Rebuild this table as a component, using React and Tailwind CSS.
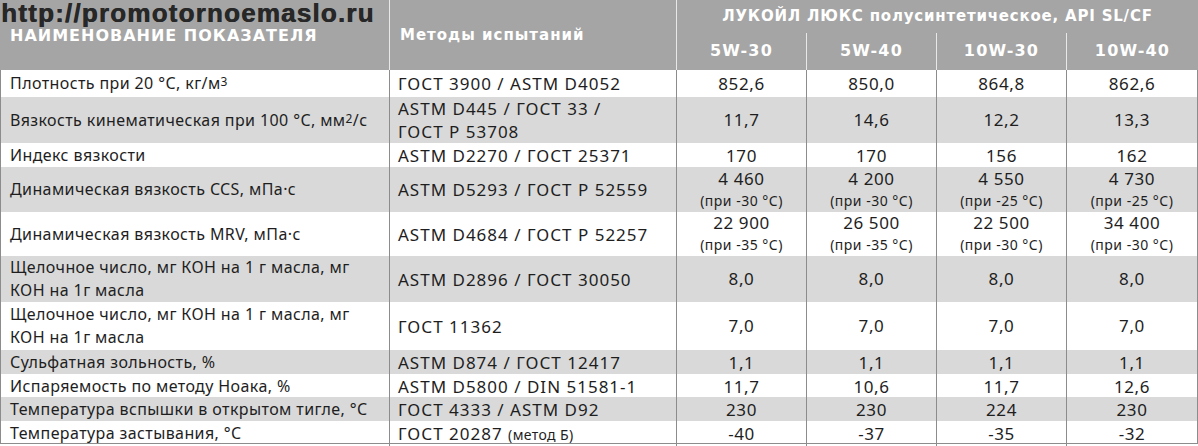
import React from "react";

const rows = [
  {
    name: (
      <>
        Плотность при 20 °C, кг/м<sup className="text-[12px] relative -top-[3px]">3</sup>
      </>
    ),
    method: "ГОСТ 3900 / ASTM D4052",
    vals: ["852,6", "850,0", "864,8", "862,6"],
    h: "h-[27px]",
  },
  {
    name: (
      <>
        Вязкость кинематическая при 100 °C, мм<sup className="text-[12px] relative -top-[3px]">2</sup>/с
      </>
    ),
    method: (
      <>
        ASTM D445 / ГОСТ 33 /
        <br />
        ГОСТ Р 53708
      </>
    ),
    vals: ["11,7", "14,6", "12,2", "13,3"],
    h: "h-[46px]",
  },
  {
    name: "Индекс вязкости",
    method: "ASTM D2270 / ГОСТ 25371",
    vals: ["170", "170", "156", "162"],
    h: "h-[24px]",
  },
  {
    name: "Динамическая вязкость CCS, мПа·с",
    method: "ASTM D5293 / ГОСТ Р 52559",
    vals: [
      ["4 460", "(при -30 °C)"],
      ["4 200", "(при -30 °C)"],
      ["4 550", "(при -25 °C)"],
      ["4 730", "(при -25 °C)"],
    ],
    h: "h-[45px]",
  },
  {
    name: "Динамическая вязкость MRV, мПа·с",
    method: "ASTM D4684 / ГОСТ Р 52257",
    vals: [
      ["22 900", "(при -35 °C)"],
      ["26 500", "(при -35 °C)"],
      ["22 500", "(при -30 °C)"],
      ["34 400", "(при -30 °C)"],
    ],
    h: "h-[44px]",
  },
  {
    name: (
      <>
        Щелочное число, мг КОН на 1 г масла, мг
        <br />
        КОН на 1г масла
      </>
    ),
    method: "ASTM D2896 / ГОСТ 30050",
    vals: ["8,0", "8,0", "8,0", "8,0"],
    h: "h-[46px]",
  },
  {
    name: (
      <>
        Щелочное число, мг КОН на 1 г масла, мг
        <br />
        КОН на 1г масла
      </>
    ),
    method: "ГОСТ 11362",
    vals: ["7,0", "7,0", "7,0", "7,0"],
    h: "h-[48px]",
  },
  {
    name: "Сульфатная зольность, %",
    method: "ASTM D874 / ГОСТ 12417",
    vals: ["1,1", "1,1", "1,1", "1,1"],
    h: "h-[24px]",
  },
  {
    name: "Испаряемость по методу Ноака, %",
    method: "ASTM D5800 / DIN 51581-1",
    vals: ["11,7", "10,6", "11,7", "12,6"],
    h: "h-[23px]",
  },
  {
    name: "Температура вспышки в открытом тигле, °C",
    method: "ГОСТ 4333 / ASTM D92",
    vals: ["230", "230", "224", "230"],
    h: "h-[24px]",
  },
  {
    name: "Температура застывания, °C",
    method: (
      <>
        ГОСТ 20287 <span className="text-[14px] tracking-[0.4px]">(метод Б)</span>
      </>
    ),
    vals: ["-40", "-37", "-35", "-32"],
    h: "h-[22px]",
  },
];

const grades = ["5W-30", "5W-40", "10W-30", "10W-40"];

function Value({ v }) {
  if (Array.isArray(v)) {
    return (
      <div className="flex flex-col items-center">
        <span className="text-[17px] leading-[22px] tracking-[0.6px]">{v[0]}</span>
        <span className="text-[14px] leading-[22px] tracking-[0.5px]">{v[1]}</span>
      </div>
    );
  }
  return <span className="tracking-[0.6px]">{v}</span>;
}

export default function App() {
  return (
    <div className="w-[1198px] h-[446px] bg-white text-[#1e1e1e] font-['Noto_Sans',sans-serif] overflow-hidden">
      {/* header */}
      <div className="grid grid-cols-[390px_287px_521px] h-[70px] bg-[#a5a5a5] font-['DejaVu_Sans',sans-serif] font-bold text-white">
        <div className="border-r border-[#e8e8e8] flex flex-col">
          <div className="font-['Liberation_Sans',sans-serif] font-bold text-[#272727] text-[26px] leading-[27px] tracking-[1.2px] pl-[1px] whitespace-nowrap [text-shadow:0.6px_0_0_#272727]">
            http://promotornoemaslo.ru
          </div>
          <div className="pl-[10px] text-[16px] leading-[16px] tracking-[1px] mt-[1px]">НАИМЕНОВАНИЕ ПОКАЗАТЕЛЯ</div>
        </div>
        <div className="border-r border-[#e8e8e8] pl-[10px] flex items-center text-[15px] tracking-[1px] pt-[1px]">
          Методы испытаний
        </div>
        <div className="flex flex-col">
          <div className="h-[33px] flex items-center justify-center text-[15px] tracking-[0.8px] pb-[1px]">
            ЛУКОЙЛ ЛЮКС полусинтетическое, API SL/CF
          </div>
          <div className="flex-1 grid grid-cols-[130px_130px_130px_131px] text-[16px] tracking-[1.2px]">
            {grades.map((g, i) => (
              <div
                key={g}
                className={`flex items-center justify-center pb-[1px] ${i < 3 ? "border-r border-[#e8e8e8]" : ""}`}
              >
                {g}
              </div>
            ))}
          </div>
        </div>
      </div>

      {/* body */}
      <div className="border-l border-b border-r border-[#8c8c8c] text-[17px]">
        {rows.map((r, i) => (
          <div
            key={i}
            className={`grid grid-cols-[389px_287px_130px_130px_130px_130px] ${r.h} ${
              i % 2 === 1 ? "bg-[#d9d9d9]" : "bg-white"
            }`}
          >
            <div className="border-r border-[#8c8c8c] pl-[9px] flex items-center text-[16px] leading-[23px] tracking-[0.4px] whitespace-nowrap">
              <div>{r.name}</div>
            </div>
            <div className="border-r border-[#8c8c8c] pl-[8px] flex items-center leading-[23px] tracking-[1px] whitespace-nowrap">
              <div>{r.method}</div>
            </div>
            {r.vals.map((v, j) => (
              <div
                key={j}
                className={`flex items-center justify-center ${j < 3 ? "border-r border-[#8c8c8c]" : ""}`}
              >
                <Value v={v} />
              </div>
            ))}
          </div>
        ))}
      </div>
    </div>
  );
}
